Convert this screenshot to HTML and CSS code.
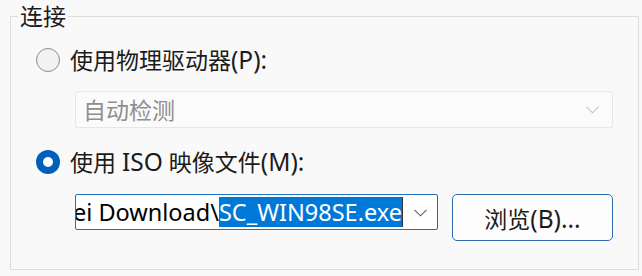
FILE: index.html
```html
<!DOCTYPE html>
<html lang="zh-CN">
<head>
<meta charset="utf-8">
<title>连接</title>
<link rel="stylesheet" href="styles.css">
</head>
<body>
<fieldset class="group">
  <legend class="group-title">连接</legend>
  <div class="group-body">
    <label class="radio-row">
      <span class="radio"></span>
      <span class="radio-label">使用物理驱动器<span class="latin">(P):</span></span>
    </label>
    <div class="combo combo-disabled">
      <span class="combo-text">自动检测</span>
      <span class="combo-arrow">
        <svg width="13" height="8" viewBox="0 0 13 8"><polyline points="0.5,0.8 6.5,6.8 12.5,0.8" fill="none" stroke="#c4c4c4" stroke-width="1.1"/></svg>
      </span>
    </div>
    <label class="radio-row radio-row-second">
      <span class="radio radio-checked"></span>
      <span class="radio-label">使用 <span class="latin">ISO</span> 映像文件<span class="latin">(M):</span></span>
    </label>
    <div class="file-row">
      <div class="combo combo-edit">
        <span class="edit-text"><span class="edit-inner">ei Download\<span class="selected">SC_WIN98SE.exe</span><span class="caret"></span></span></span>
        <span class="combo-arrow">
          <svg width="13" height="8" viewBox="0 0 13 8"><polyline points="0.5,0.8 6.5,6.8 12.5,0.8" fill="none" stroke="#606060" stroke-width="1.1"/></svg>
        </span>
      </div>
      <button class="btn" type="button">浏览<span class="latin">(B)...</span></button>
    </div>
  </div>
</fieldset>
</body>
</html>
```
FILE: styles.css
```css
html, body {
  margin: 0;
  padding: 0;
}
body {
  width: 642px;
  height: 276px;
  overflow: hidden;
  background: #f9f9f9;
  font-family: "Noto Sans", "Noto Sans CJK SC", sans-serif;
  font-size: 23px;
  color: #1b1b1b;
}
.latin {
  font-size: 24.5px;
}
.group {
  margin: 0 3px 0 10px;
  padding: 0;
  border: 1px solid #dddddd;
  min-width: 0;
}
.group-title {
  margin-left: 7px;
  padding: 0 2px;
  line-height: 32px;
  height: 32px;
}
.group-body {
  padding: 12px 25px 28px 25px;
  display: flex;
  flex-direction: column;
}
.radio-row {
  display: flex;
  align-items: center;
  height: 32px;
  gap: 10px;
}
.radio-row-second {
  margin-top: 18px;
}
.radio {
  box-sizing: border-box;
  width: 24px;
  height: 24px;
  border-radius: 50%;
  border: 1.5px solid #8b8b8b;
  background: #f2f2f2;
  flex: none;
}
.radio-checked {
  border: none;
  background: #005fb8;
  display: flex;
  align-items: center;
  justify-content: center;
}
.radio-checked::after {
  content: "";
  width: 10px;
  height: 10px;
  border-radius: 50%;
  background: #ffffff;
}
.radio-label {
  line-height: 32px;
  white-space: nowrap;
}
.combo {
  box-sizing: border-box;
  display: flex;
  align-items: center;
  height: 37px;
  margin-left: 39px;
  border-radius: 3px;
}
.combo-disabled {
  margin-top: 15px;
  background: #fbfbfb;
  border: 1px solid #e6e6e6;
  color: #8f8f8f;
}
.combo-text {
  flex: 1;
  padding-left: 7px;
  line-height: 34px;
}
.combo-arrow {
  flex: none;
  width: 34px;
  display: flex;
  align-items: center;
  justify-content: center;
  padding-top: 1px;
}
.combo-disabled .combo-arrow {
  width: 40px;
}
.file-row {
  display: flex;
  align-items: flex-start;
  margin-top: 16px;
  margin-left: 39px;
  gap: 14px;
}
.combo-edit {
  margin-left: 0;
  width: 363px;
  height: 36px;
  background: #ffffff;
  border: 1px solid #1f6fbf;
  border-radius: 2px;
  color: #000000;
}
.edit-text {
  flex: 1;
  min-width: 0;
  overflow: hidden;
  display: flex;
  justify-content: flex-end;
  white-space: nowrap;
}
.edit-inner {
  display: flex;
  align-items: center;
  font-size: 23.5px;
  line-height: 30px;
  flex: none;
}
.selected {
  background: #0078d7;
  color: #ffffff;
  line-height: 30px;
}
.caret {
  width: 1px;
  height: 30px;
  background: #333333;
}
.btn {
  box-sizing: border-box;
  width: 161px;
  height: 47px;
  margin: 0;
  padding: 0;
  background: #fdfdfd;
  border: 1px solid #2d69ad;
  border-radius: 5px;
  font-family: "Noto Sans", "Noto Sans CJK SC", sans-serif;
  font-size: 23px;
  color: #1b1b1b;
}
```
